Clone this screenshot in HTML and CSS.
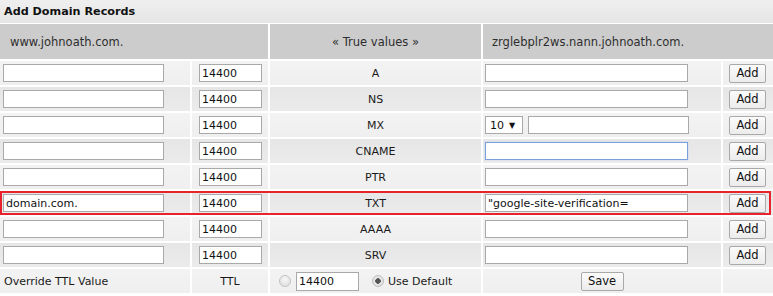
FILE: index.html
```html
<!DOCTYPE html>
<html>
<head>
<meta charset="utf-8">
<link rel="stylesheet" href="styles.css">
</head>
<body>
<div class="panel">
  <div class="title">Add Domain Records</div>
  <div class="wrap">
    <table class="records">
      <colgroup>
        <col class="c1"><col class="c2"><col class="c3"><col class="c4"><col class="c5">
      </colgroup>
      <thead>
        <tr>
          <th colspan="2" class="h-left">www.johnoath.com.</th>
          <th class="h-mid">« True values »</th>
          <th colspan="2" class="h-left h-right">zrglebplr2ws.nann.johnoath.com.</th>
        </tr>
      </thead>
      <tbody>
        <tr class="odd">
          <td class="cn"><input class="in name" type="text"></td>
          <td class="ct"><input class="in ttl" type="text" value="14400"></td>
          <td class="ty">A</td>
          <td class="cv"><input class="in val" type="text"></td>
          <td class="cb"><button class="btn">Add</button></td>
        </tr>
        <tr class="even">
          <td class="cn"><input class="in name" type="text"></td>
          <td class="ct"><input class="in ttl" type="text" value="14400"></td>
          <td class="ty">NS</td>
          <td class="cv"><input class="in val" type="text"></td>
          <td class="cb"><button class="btn">Add</button></td>
        </tr>
        <tr class="odd">
          <td class="cn"><input class="in name" type="text"></td>
          <td class="ct"><input class="in ttl" type="text" value="14400"></td>
          <td class="ty">MX</td>
          <td class="cv"><div class="mx"><span class="sel">10 <span class="arr">▼</span></span><input class="in mxval" type="text"></div></td>
          <td class="cb"><button class="btn">Add</button></td>
        </tr>
        <tr class="even">
          <td class="cn"><input class="in name" type="text"></td>
          <td class="ct"><input class="in ttl" type="text" value="14400"></td>
          <td class="ty">CNAME</td>
          <td class="cv"><input class="in val focus" type="text"></td>
          <td class="cb"><button class="btn">Add</button></td>
        </tr>
        <tr class="odd">
          <td class="cn"><input class="in name" type="text"></td>
          <td class="ct"><input class="in ttl" type="text" value="14400"></td>
          <td class="ty">PTR</td>
          <td class="cv"><input class="in val" type="text"></td>
          <td class="cb"><button class="btn">Add</button></td>
        </tr>
        <tr class="even">
          <td class="cn"><input class="in name" type="text" value="domain.com."></td>
          <td class="ct"><input class="in ttl" type="text" value="14400"></td>
          <td class="ty">TXT</td>
          <td class="cv"><input class="in val" type="text" value="&quot;google-site-verification="></td>
          <td class="cb"><button class="btn">Add</button></td>
        </tr>
        <tr class="odd">
          <td class="cn"><input class="in name" type="text"></td>
          <td class="ct"><input class="in ttl" type="text" value="14400"></td>
          <td class="ty">AAAA</td>
          <td class="cv"><input class="in val" type="text"></td>
          <td class="cb"><button class="btn">Add</button></td>
        </tr>
        <tr class="even">
          <td class="cn"><input class="in name" type="text"></td>
          <td class="ct"><input class="in ttl" type="text" value="14400"></td>
          <td class="ty">SRV</td>
          <td class="cv"><input class="in val" type="text"></td>
          <td class="cb"><button class="btn">Add</button></td>
        </tr>
        <tr class="odd last">
          <td class="ov">Override TTL Value</td>
          <td class="ttl-label">TTL</td>
          <td class="ttl-opts">
            <div class="opts">
              <input type="radio" name="ttl" class="radio">
              <input class="in ttl2" type="text" value="14400">
              <input type="radio" name="ttl" class="radio" checked>
              <span class="usedef">Use Default</span>
            </div>
          </td>
          <td class="save-cell"><button class="btn save">Save</button></td>
          <td class="cb"></td>
        </tr>
      </tbody>
    </table>
    <div class="highlight"></div>
  </div>
</div>
</body>
</html>
```

FILE: styles.css
```css
html, body {
  margin: 0;
  padding: 0;
  background: #ffffff;
}

body {
  font-family: "DejaVu Sans", Verdana, sans-serif;
  font-size: 11px;
  color: #1a1a1a;
}

.panel {
  width: 773px;
}

.title {
  height: 23px;
  line-height: 23px;
  padding-left: 4px;
  font-weight: bold;
  font-size: 11.2px;
  color: #111111;
  background: linear-gradient(#efefef, #e5e5e5);
}

.wrap {
  position: relative;
}

.records {
  width: 773px;
  table-layout: fixed;
  border-collapse: separate;
  border-spacing: 0;
}

.c1 { width: 190px; }
.c2 { width: 78px; }
.c3 { width: 213px; }
.c4 { width: 240px; }
.c5 { width: 52px; }

.records th {
  background: #cccccc;
  height: 36px;
  padding: 0;
  font-weight: normal;
  font-size: 11.5px;
  color: #2e2e2e;
  border-top: 1px solid #ffffff;
  border-left: 2px solid #ffffff;
  box-sizing: border-box;
}

.records th:first-child {
  border-left: 0;
}

.h-left {
  text-align: left;
  padding-left: 10px !important;
}

.h-right {
  padding-left: 9px !important;
}

.h-mid {
  text-align: center;
}

.records td {
  height: 24px;
  padding: 0;
  border-top: 2px solid #ffffff;
  border-left: 2px solid #ffffff;
  vertical-align: middle;
}

.records td:first-child {
  border-left: 0;
}

.odd td {
  background: linear-gradient(#f3f3f3, #efefef);
}

.even td {
  background: linear-gradient(#e6e6e6, #ebebeb);
}

.in {
  font-family: "DejaVu Sans", Verdana, sans-serif;
  font-size: 11px;
  color: #111111;
  height: 18px;
  box-sizing: border-box;
  border: 1px solid #a9a9a9;
  background: #ffffff;
  padding: 0 2px;
  margin: 0;
  display: block;
  outline: none;
}

.cn { padding-left: 3px !important; }
.name { width: 161px; }

.ct { padding-left: 7px !important; }
.ttl { width: 63px; }

.ty { text-align: center; }

.cv { padding-left: 2px !important; }
.val { width: 203px; }

.focus {
  border-color: #7a9fdc;
  box-shadow: 0 0 1px 0 #a8c4f0;
}

.mx {
  display: flex;
  align-items: center;
  gap: 5px;
}

.sel {
  display: inline-flex;
  align-items: center;
  box-sizing: border-box;
  width: 38px;
  height: 18px;
  border: 1px solid #a9a9a9;
  background: #ffffff;
  padding-left: 4px;
  font-size: 11px;
  color: #111111;
}

.arr {
  font-size: 8px;
  margin-left: 5px;
}

.mxval { width: 161px; }

.cb { padding-left: 6px !important; }

.btn {
  font-family: "DejaVu Sans", Verdana, sans-serif;
  font-size: 11.5px;
  color: #111111;
  width: 37px;
  height: 19px;
  padding: 0;
  margin: 0;
  box-sizing: border-box;
  border: 1px solid #a9a9a9;
  border-radius: 2px;
  background: linear-gradient(#fbfbfb, #ececec);
  display: block;
}

.last td {
  height: 24px;
}

.ov {
  padding-left: 4px !important;
}

.ttl-label {
  text-align: center;
}

.ttl-opts {
  padding-left: 9px !important;
}

.opts {
  display: flex;
  align-items: center;
}

.radio {
  appearance: none;
  -webkit-appearance: none;
  width: 12px;
  height: 12px;
  margin: 0 5px 0 0;
  border: 1px solid #c2c2c2;
  border-radius: 50%;
  background: radial-gradient(circle at 50% 35%, #f6f6f6, #dcdcdc);
  box-sizing: border-box;
}

.radio:checked {
  background: radial-gradient(circle, #555555 0 2.5px, #e8e8e8 3px, #dddddd);
  border-color: #bdbdbd;
}

.ttl2 {
  width: 63px;
  height: 19px;
  margin-right: 13px;
}

.usedef {
  margin-left: -1px;
}

.save-cell {
  text-align: center;
}

.save {
  width: 43px;
  height: 19px;
  margin: 0 auto;
}

.highlight {
  position: absolute;
  left: 0;
  top: 168px;
  width: 771px;
  height: 24px;
  border: 2px solid #e8232b;
  box-sizing: border-box;
  pointer-events: none;
}
```
